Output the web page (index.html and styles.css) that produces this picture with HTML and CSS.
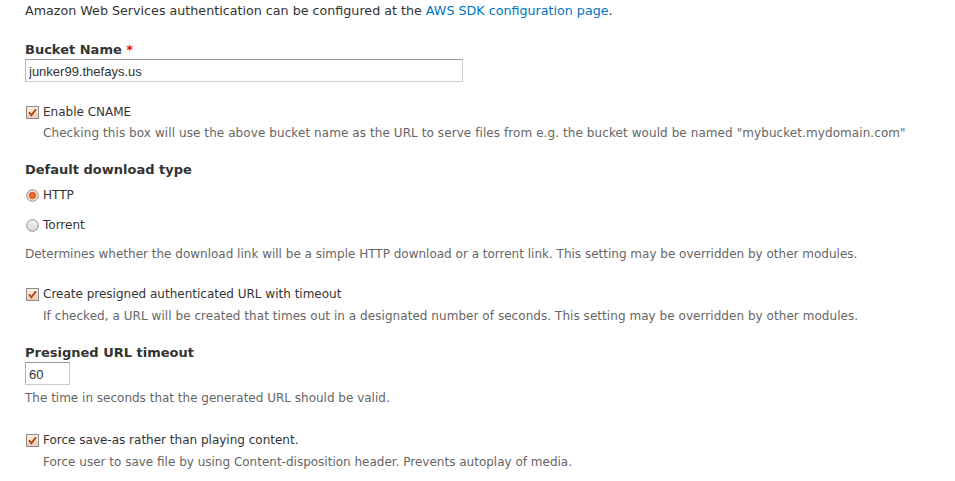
FILE: index.html
```html
<!DOCTYPE html>
<html>
<head>
<meta charset="utf-8">
<link rel="stylesheet" href="styles.css">
</head>
<body>
<div class="page">
  <p class="intro">Amazon Web Services authentication can be configured at the <a href="#">AWS SDK configuration page</a>.</p>

  <div class="field f-bucket">
    <div class="title">Bucket Name <span class="req">*</span></div>
    <input class="text wide" type="text" value="junker99.thefays.us">
  </div>

  <div class="check c-cname">
    <div class="row">
      <svg class="cb" width="13" height="13" viewBox="0 0 13 13"><defs><linearGradient id="g1" x1="0" y1="0" x2="0" y2="1"><stop offset="0" stop-color="#fdf0e6"/><stop offset="1" stop-color="#f3c9a9"/></linearGradient></defs><rect x="0.5" y="0.5" width="12" height="12" fill="url(#g1)" stroke="#8c8c8c"/><path d="M3 6.3 L5.4 9.3 L10 3.2" fill="none" stroke="#a6401a" stroke-width="1.8"/></svg>
      <span>Enable CNAME</span>
    </div>
    <div class="desc d-cname">Checking this box will use the above bucket name as the URL to serve files from e.g. the bucket would be named "mybucket.mydomain.com"</div>
  </div>

  <div class="radios">
    <div class="title">Default download type</div>
    <div class="row r-first">
      <svg class="rd" width="13" height="13" viewBox="0 0 13 13"><defs><radialGradient id="g2" cx="0.5" cy="0.5" r="0.5"><stop offset="0" stop-color="#ffffff"/><stop offset="1" stop-color="#f6d6bd"/></radialGradient></defs><circle cx="6.5" cy="6.5" r="5.8" fill="url(#g2)" stroke="#a08c80" stroke-width="1"/><circle cx="6.5" cy="6.5" r="3.2" fill="#e86a2c" stroke="#b8471a" stroke-width="0.8"/></svg>
      <span>HTTP</span>
    </div>
    <div class="row r-next">
      <svg class="rd" width="13" height="13" viewBox="0 0 13 13"><defs><linearGradient id="g3" x1="0" y1="0" x2="0" y2="1"><stop offset="0" stop-color="#f4f4f4"/><stop offset="1" stop-color="#d6d6d6"/></linearGradient></defs><circle cx="6.5" cy="6.5" r="5.8" fill="url(#g3)" stroke="#8c8c8c" stroke-width="1"/></svg>
      <span>Torrent</span>
    </div>
    <div class="desc flat d-radios">Determines whether the download link will be a simple HTTP download or a torrent link. This setting may be overridden by other modules.</div>
  </div>

  <div class="check c-presign">
    <div class="row">
      <svg class="cb" width="13" height="13" viewBox="0 0 13 13"><rect x="0.5" y="0.5" width="12" height="12" fill="url(#g1)" stroke="#8c8c8c"/><path d="M3 6.3 L5.4 9.3 L10 3.2" fill="none" stroke="#a6401a" stroke-width="1.8"/></svg>
      <span>Create presigned authenticated URL with timeout</span>
    </div>
    <div class="desc d-presign">If checked, a URL will be created that times out in a designated number of seconds. This setting may be overridden by other modules.</div>
  </div>

  <div class="field f-timeout">
    <div class="title">Presigned URL timeout</div>
    <input class="text small" type="text" value="60">
    <div class="desc flat d-timeout">The time in seconds that the generated URL should be valid.</div>
  </div>

  <div class="check c-force">
    <div class="row">
      <svg class="cb" width="13" height="13" viewBox="0 0 13 13"><rect x="0.5" y="0.5" width="12" height="12" fill="url(#g1)" stroke="#8c8c8c"/><path d="M3 6.3 L5.4 9.3 L10 3.2" fill="none" stroke="#a6401a" stroke-width="1.8"/></svg>
      <span>Force save-as rather than playing content.</span>
    </div>
    <div class="desc">Force user to save file by using Content-disposition header. Prevents autoplay of media.</div>
  </div>
</div>
</body>
</html>
```

FILE: styles.css
```css
html, body {
  margin: 0;
  padding: 0;
  background: #ffffff;
}
body {
  font-family: "DejaVu Sans", Verdana, sans-serif;
  font-size: 12px;
  line-height: 18px;
  color: #333333;
}
.page {
  padding: 2px 0 0 25px;
}
.intro {
  margin: 0;
  font-size: 12.7px;
}
a {
  color: #0074bd;
  text-decoration: none;
}
.title {
  font-weight: bold;
  font-size: 13px;
  color: #333333;
}
.req {
  color: #ee0000;
}
.field, .check, .radios {
  display: flex;
  flex-direction: column;
  align-items: flex-start;
}
.f-bucket { margin-top: 21px; }
.text {
  box-sizing: border-box;
  height: 23px;
  margin: 0;
  padding: 2px 3px 1px;
  border: 1px solid #cccccc;
  border-top-color: #999999;
  border-left-color: #b4b4b4;
  font-family: "Liberation Sans", Arial, sans-serif;
  font-size: 13px;
  color: #333333;
  background: #ffffff;
  outline: none;
}
.wide { width: 438px; }
.small { width: 45px; }
.row {
  display: flex;
  align-items: center;
  gap: 4px;
}
.cb, .rd {
  margin-left: 1px;
  flex: none;
}
.desc {
  color: #666666;
  margin-top: 3px;
  padding-left: 18px;
}
.d-cname { letter-spacing: 0.08px; }
.d-presign { letter-spacing: 0.05px; }
.desc.flat { padding-left: 0; }
.c-cname { margin-top: 21px; }
.radios { margin-top: 19px; }
.r-first { margin-top: 7px; }
.r-next { margin-top: 12px; }
.d-radios { margin-top: 11px; }
.c-presign { margin-top: 22px; }
.c-presign .desc { margin-top: 4px; }
.f-timeout { margin-top: 19px; }
.d-timeout { margin-top: 4px; }
.c-force { margin-top: 24px; }
.c-force .desc { margin-top: 4px; }
```
